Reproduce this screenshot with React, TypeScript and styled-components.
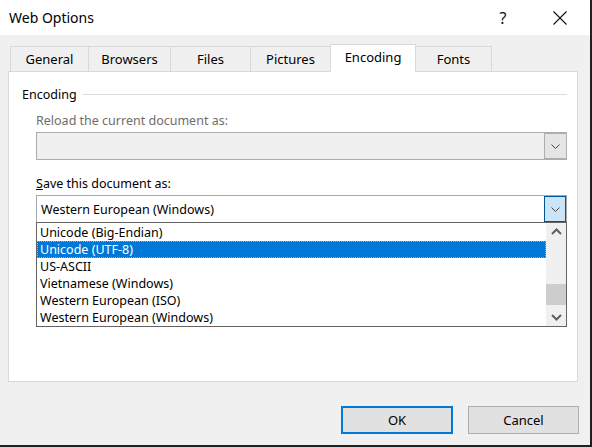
import { createGlobalStyle, styled } from "styled-components";

const GlobalStyle = createGlobalStyle`
  html, body {
    margin: 0;
    padding: 0;
    background: #202020;
  }
  body {
    font-family: "Noto Sans", "Open Sans", sans-serif;
    font-size: 12.5px;
    color: #000;
  }
`;

const tabs = [
  { label: "General", width: 79 },
  { label: "Browsers", width: 83 },
  { label: "Files", width: 81 },
  { label: "Pictures", width: 81 },
  { label: "Encoding", width: 86 },
  { label: "Fonts", width: 77 },
];

const encodings = [
  "Unicode (Big-Endian)",
  "Unicode (UTF-8)",
  "US-ASCII",
  "Vietnamese (Windows)",
  "Western European (ISO)",
  "Western European (Windows)",
];

const Chevron = ({ up, bold }: { up?: boolean; bold?: boolean }) => (
  <svg width={bold ? 11 : 9} height={bold ? 7 : 5} viewBox={bold ? "0 0 11 7" : "0 0 9 5"}>
    {bold ? (
      <path
        d={up ? "M1 6 L5.5 1.5 L10 6" : "M1 1 L5.5 5.5 L10 1"}
        fill="none"
        stroke="#606060"
        strokeWidth="2"
      />
    ) : (
      <path d="M0.5 0.5 L4.5 4.5 L8.5 0.5" fill="none" stroke="#444" strokeWidth="1" />
    )}
  </svg>
);

const App = () => {
  return (
    <>
      <GlobalStyle />
      <Window>
        <TitleBar>
          <Title>Web Options</Title>
          <TitleButtons>
            <TitleButton>?</TitleButton>
            <TitleButton>
              <svg width="14" height="14" viewBox="0 0 14 14">
                <path d="M0.5 0.5 L13.5 13.5 M13.5 0.5 L0.5 13.5" stroke="#111" strokeWidth="1.1" />
              </svg>
            </TitleButton>
          </TitleButtons>
        </TitleBar>
        <Body>
          <TabStrip>
            {tabs.map((t) => (
              <Tab key={t.label} $width={t.width} $active={t.label === "Encoding"}>
                {t.label}
              </Tab>
            ))}
          </TabStrip>
          <Panel>
            <GroupHeader>
              <span>Encoding</span>
              <GroupLine />
            </GroupHeader>
            <Field>
              <Label $disabled>Reload the current document as:</Label>
              <Combo $disabled>
                <ComboText />
                <DropButton $disabled>
                  <Chevron />
                </DropButton>
              </Combo>
            </Field>
            <Field $top={15}>
              <Label>
                <u>S</u>ave this document as:
              </Label>
              <Combo>
                <ComboText>Western European (Windows)</ComboText>
                <DropButton>
                  <Chevron />
                </DropButton>
              </Combo>
              <ListBox>
                <Items>
                  {encodings.map((e) => (
                    <Item key={e} $selected={e === "Unicode (UTF-8)"}>
                      {e}
                    </Item>
                  ))}
                </Items>
                <ScrollBar>
                  <ScrollArrow>
                    <Chevron up bold />
                  </ScrollArrow>
                  <Track>
                    <Thumb />
                  </Track>
                  <ScrollArrow>
                    <Chevron bold />
                  </ScrollArrow>
                </ScrollBar>
              </ListBox>
            </Field>
          </Panel>
          <ButtonRow>
            <Button $default>OK</Button>
            <Button>Cancel</Button>
          </ButtonRow>
        </Body>
      </Window>
    </>
  );
};

export default App;

const Window = styled.div`
  width: 590px;
  height: 445px;
  background: #f0f0f0;
  display: flex;
  flex-direction: column;
`;

const TitleBar = styled.div`
  height: 35px;
  background: #fff;
  display: flex;
  align-items: center;
  padding-left: 9px;
  flex-shrink: 0;
`;

const Title = styled.div`
  font-size: 14px;
  color: #000;
`;

const TitleButtons = styled.div`
  margin-left: auto;
  display: flex;
  gap: 11px;
  padding-right: 7px;
`;

const TitleButton = styled.div`
  width: 46px;
  height: 35px;
  display: flex;
  align-items: center;
  justify-content: center;
  font-size: 16px;
  color: #111;
`;

const Body = styled.div`
  flex: 1;
  display: flex;
  flex-direction: column;
  padding: 9px 11px 11px 8px;
`;

const TabStrip = styled.div`
  height: 27px;
  display: flex;
  align-items: flex-end;
  padding-left: 2px;
`;

const Tab = styled.div<{ $width: number; $active?: boolean }>`
  width: ${(p) => p.$width}px;
  height: ${(p) => (p.$active ? 28 : 25)}px;
  margin-bottom: ${(p) => (p.$active ? -1 : 0)}px;
  margin-right: -1px;
  box-sizing: border-box;
  border: 1px solid #d9d9d9;
  border-bottom: none;
  background: ${(p) => (p.$active ? "#fff" : "#f0f0f0")};
  position: relative;
  z-index: ${(p) => (p.$active ? 1 : 0)};
  display: flex;
  align-items: center;
  justify-content: center;
  padding-bottom: ${(p) => (p.$active ? 3 : 0)}px;
  font-size: 13px;
`;

const Panel = styled.div`
  height: 311px;
  box-sizing: border-box;
  margin-right: 1px;
  background: #fff;
  border: 1px solid #d9d9d9;
  padding: 14px 10px 0 13px;
`;

const GroupHeader = styled.div`
  display: flex;
  align-items: center;
  height: 17px;
  gap: 6px;
`;

const GroupLine = styled.div`
  flex: 1;
  height: 1px;
  background: #dcdcdc;
`;

const Field = styled.div<{ $top?: number }>`
  margin-left: 14px;
  margin-top: ${(p) => p.$top ?? 9}px;
  display: flex;
  flex-direction: column;
`;

const Label = styled.div<{ $disabled?: boolean }>`
  height: 17px;
  line-height: 17px;
  color: ${(p) => (p.$disabled ? "#6d6d6d" : "#000")};
  margin-bottom: 3px;
`;

const Combo = styled.div<{ $disabled?: boolean }>`
  height: 28px;
  box-sizing: border-box;
  border: 1px solid ${(p) => (p.$disabled ? "#adadad" : "#a9a9a9")};
  background: ${(p) => (p.$disabled ? "#f0f0f0" : "#fff")};
  display: flex;
`;

const ComboText = styled.div`
  flex: 1;
  display: flex;
  align-items: center;
  padding-left: 4px;
`;

const DropButton = styled.div<{ $disabled?: boolean }>`
  width: 22px;
  box-sizing: border-box;
  border: 1px solid ${(p) => (p.$disabled ? "#adadad" : "#005499")};
  border-right: ${(p) => (p.$disabled ? "none" : "1px solid #005499")};
  background: ${(p) => (p.$disabled ? "#e5e5e5" : "#cce4f7")};
  display: flex;
  align-items: center;
  justify-content: center;
`;

const ListBox = styled.div`
  height: 105px;
  box-sizing: border-box;
  margin-top: -1px;
  border: 1px solid #646464;
  background: #fff;
  display: flex;
`;

const Items = styled.div`
  flex: 1;
  padding-top: 1px;
`;

const Item = styled.div<{ $selected?: boolean }>`
  height: 17px;
  line-height: 17px;
  padding-left: 3px;
  background: ${(p) => (p.$selected ? "#0078d7" : "transparent")};
  color: ${(p) => (p.$selected ? "#fff" : "#000")};
  outline: ${(p) => (p.$selected ? "1px dotted #e8a040" : "none")};
  outline-offset: -1px;
`;

const ScrollBar = styled.div`
  width: 20px;
  background: #f0f0f0;
  display: flex;
  flex-direction: column;
`;

const ScrollArrow = styled.div`
  height: 17px;
  display: flex;
  align-items: center;
  justify-content: center;
`;

const Track = styled.div`
  flex: 1;
  display: flex;
  flex-direction: column;
  justify-content: flex-end;
  padding-bottom: 4px;
`;

const Thumb = styled.div`
  height: 21px;
  background: #cdcdcd;
`;

const ButtonRow = styled.div`
  margin-top: 24px;
  display: flex;
  justify-content: flex-end;
  gap: 15px;
`;

const Button = styled.div<{ $default?: boolean }>`
  width: ${(p) => (p.$default ? 112 : 111)}px;
  height: 28px;
  box-sizing: border-box;
  border: ${(p) => (p.$default ? "2px solid #0078d7" : "1px solid #adadad")};
  background: #e1e1e1;
  display: flex;
  align-items: center;
  justify-content: center;
  font-size: 13px;
`;
